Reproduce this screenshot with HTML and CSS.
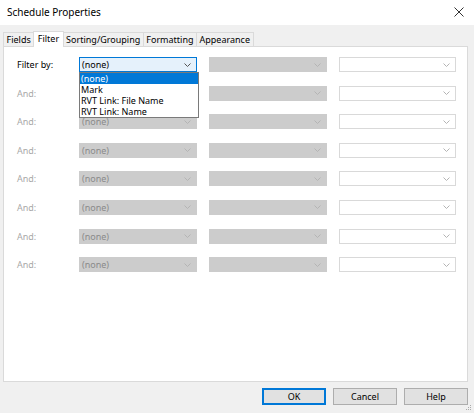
FILE: index.html
```html
<!DOCTYPE html>
<html>
<head>
<meta charset="utf-8">
<link rel="stylesheet" href="styles.css">
</head>
<body>
<div class="window">
  <div class="titlebar">
    <span class="title">Schedule Properties</span>
    <svg class="close" width="10" height="10" viewBox="0 0 10 10"><path d="M0.5 0.5 L9.5 9.5 M9.5 0.5 L0.5 9.5" stroke="#333" stroke-width="1" fill="none"/></svg>
  </div>
  <div class="body">
    <div class="tabs">
      <div class="tab">Fields</div>
      <div class="tab active">Filter</div>
      <div class="tab">Sorting/Grouping</div>
      <div class="tab">Formatting</div>
      <div class="tab">Appearance</div>
    </div>
    <div class="panel">
      <div class="grid">
        <div class="label">Filter by:</div>
        <div class="combo focus"><span>(none)</span><svg class="chev" width="7" height="4" viewBox="0 0 7 4"><path d="M0.5 0.5 L3.5 3.5 L6.5 0.5" stroke="#555" fill="none"/></svg></div>
        <div class="combo disabled"><span></span><svg class="chev" width="7" height="4" viewBox="0 0 7 4"><path d="M0.5 0.5 L3.5 3.5 L6.5 0.5" stroke="#b4b4b4" fill="none"/></svg></div>
        <div class="combo empty"><span></span><svg class="chev" width="7" height="4" viewBox="0 0 7 4"><path d="M0.5 0.5 L3.5 3.5 L6.5 0.5" stroke="#b4b4b4" fill="none"/></svg></div>

        <div class="label dim">And:</div>
        <div class="combo disabled"><span></span><svg class="chev" width="7" height="4" viewBox="0 0 7 4"><path d="M0.5 0.5 L3.5 3.5 L6.5 0.5" stroke="#b4b4b4" fill="none"/></svg></div>
        <div class="combo disabled"><span></span><svg class="chev" width="7" height="4" viewBox="0 0 7 4"><path d="M0.5 0.5 L3.5 3.5 L6.5 0.5" stroke="#b4b4b4" fill="none"/></svg></div>
        <div class="combo empty"><span></span><svg class="chev" width="7" height="4" viewBox="0 0 7 4"><path d="M0.5 0.5 L3.5 3.5 L6.5 0.5" stroke="#b4b4b4" fill="none"/></svg></div>

        <div class="label dim">And:</div>
        <div class="combo disabled low"><span>(none)</span><svg class="chev" width="7" height="4" viewBox="0 0 7 4"><path d="M0.5 0.5 L3.5 3.5 L6.5 0.5" stroke="#b4b4b4" fill="none"/></svg></div>
        <div class="combo disabled"><span></span><svg class="chev" width="7" height="4" viewBox="0 0 7 4"><path d="M0.5 0.5 L3.5 3.5 L6.5 0.5" stroke="#b4b4b4" fill="none"/></svg></div>
        <div class="combo empty"><span></span><svg class="chev" width="7" height="4" viewBox="0 0 7 4"><path d="M0.5 0.5 L3.5 3.5 L6.5 0.5" stroke="#b4b4b4" fill="none"/></svg></div>

        <div class="label dim">And:</div>
        <div class="combo disabled"><span>(none)</span><svg class="chev" width="7" height="4" viewBox="0 0 7 4"><path d="M0.5 0.5 L3.5 3.5 L6.5 0.5" stroke="#b4b4b4" fill="none"/></svg></div>
        <div class="combo disabled"><span></span><svg class="chev" width="7" height="4" viewBox="0 0 7 4"><path d="M0.5 0.5 L3.5 3.5 L6.5 0.5" stroke="#b4b4b4" fill="none"/></svg></div>
        <div class="combo empty"><span></span><svg class="chev" width="7" height="4" viewBox="0 0 7 4"><path d="M0.5 0.5 L3.5 3.5 L6.5 0.5" stroke="#b4b4b4" fill="none"/></svg></div>

        <div class="label dim">And:</div>
        <div class="combo disabled"><span>(none)</span><svg class="chev" width="7" height="4" viewBox="0 0 7 4"><path d="M0.5 0.5 L3.5 3.5 L6.5 0.5" stroke="#b4b4b4" fill="none"/></svg></div>
        <div class="combo disabled"><span></span><svg class="chev" width="7" height="4" viewBox="0 0 7 4"><path d="M0.5 0.5 L3.5 3.5 L6.5 0.5" stroke="#b4b4b4" fill="none"/></svg></div>
        <div class="combo empty"><span></span><svg class="chev" width="7" height="4" viewBox="0 0 7 4"><path d="M0.5 0.5 L3.5 3.5 L6.5 0.5" stroke="#b4b4b4" fill="none"/></svg></div>

        <div class="label dim">And:</div>
        <div class="combo disabled"><span>(none)</span><svg class="chev" width="7" height="4" viewBox="0 0 7 4"><path d="M0.5 0.5 L3.5 3.5 L6.5 0.5" stroke="#b4b4b4" fill="none"/></svg></div>
        <div class="combo disabled"><span></span><svg class="chev" width="7" height="4" viewBox="0 0 7 4"><path d="M0.5 0.5 L3.5 3.5 L6.5 0.5" stroke="#b4b4b4" fill="none"/></svg></div>
        <div class="combo empty"><span></span><svg class="chev" width="7" height="4" viewBox="0 0 7 4"><path d="M0.5 0.5 L3.5 3.5 L6.5 0.5" stroke="#b4b4b4" fill="none"/></svg></div>

        <div class="label dim">And:</div>
        <div class="combo disabled"><span>(none)</span><svg class="chev" width="7" height="4" viewBox="0 0 7 4"><path d="M0.5 0.5 L3.5 3.5 L6.5 0.5" stroke="#b4b4b4" fill="none"/></svg></div>
        <div class="combo disabled"><span></span><svg class="chev" width="7" height="4" viewBox="0 0 7 4"><path d="M0.5 0.5 L3.5 3.5 L6.5 0.5" stroke="#b4b4b4" fill="none"/></svg></div>
        <div class="combo empty"><span></span><svg class="chev" width="7" height="4" viewBox="0 0 7 4"><path d="M0.5 0.5 L3.5 3.5 L6.5 0.5" stroke="#b4b4b4" fill="none"/></svg></div>

        <div class="label dim">And:</div>
        <div class="combo disabled"><span>(none)</span><svg class="chev" width="7" height="4" viewBox="0 0 7 4"><path d="M0.5 0.5 L3.5 3.5 L6.5 0.5" stroke="#b4b4b4" fill="none"/></svg></div>
        <div class="combo disabled"><span></span><svg class="chev" width="7" height="4" viewBox="0 0 7 4"><path d="M0.5 0.5 L3.5 3.5 L6.5 0.5" stroke="#b4b4b4" fill="none"/></svg></div>
        <div class="combo empty"><span></span><svg class="chev" width="7" height="4" viewBox="0 0 7 4"><path d="M0.5 0.5 L3.5 3.5 L6.5 0.5" stroke="#b4b4b4" fill="none"/></svg></div>
      </div>
      <ul class="droplist">
        <li class="sel">(none)</li>
        <li>Mark</li>
        <li>RVT Link: File Name</li>
        <li>RVT Link: Name</li>
      </ul>
    </div>
    <div class="buttons">
      <div class="btn default">OK</div>
      <div class="btn">Cancel</div>
      <div class="btn">Help</div>
    </div>
    <svg class="grip" width="6" height="6" viewBox="0 0 6 6"><rect x="4" y="0" width="1" height="1" fill="#aaa"/><rect x="2" y="2" width="1" height="1" fill="#aaa"/><rect x="4" y="2" width="1" height="1" fill="#aaa"/><rect x="0" y="4" width="1" height="1" fill="#aaa"/><rect x="2" y="4" width="1" height="1" fill="#aaa"/><rect x="4" y="4" width="1" height="1" fill="#aaa"/></svg>
  </div>
</div>
</body>
</html>
```

FILE: styles.css
```css
html, body {
  margin: 0;
  padding: 0;
}
body {
  width: 474px;
  height: 413px;
  overflow: hidden;
  font-family: "Noto Sans", "Open Sans", sans-serif;
  font-size: 9px;
  color: #000;
  background: #f0f0f0;
}
.window {
  width: 474px;
  height: 413px;
  display: flex;
  flex-direction: column;
}
.titlebar {
  height: 25px;
  flex: none;
  background: #fff;
  display: flex;
  align-items: center;
  justify-content: space-between;
  padding: 0 10px 0 7px;
}
.title {
  font-size: 10px;
  color: #000;
  margin-top: -1px;
}
.close {
  margin-top: -1px;
}
.body {
  position: relative;
  flex: 1;
  padding: 7px 6px 0 3px;
}
.tabs {
  display: flex;
  align-items: flex-end;
  height: 14px;
  position: relative;
  z-index: 1;
}
.tab {
  height: 13px;
  line-height: 13px;
  padding: 0 2.5px;
  background: #f0f0f0;
  border: 1px solid #dadada;
  border-bottom: none;
  margin-right: -1px;
  color: #000;
}
.tab.active {
  background: #fff;
  height: 15px;
  line-height: 13px;
  padding: 0 3.5px;
  margin-bottom: -1px;
  position: relative;
  z-index: 2;
}
.panel {
  position: relative;
  height: 336px;
  background: #fff;
  border: 1px solid #dadada;
  box-sizing: border-box;
  padding: 10px 0 0 13px;
}
.grid {
  display: grid;
  grid-template-columns: 50px 118px 118px 117px;
  column-gap: 12px;
  row-gap: 13.6px;
}
.label {
  height: 15px;
  line-height: 15px;
  color: #000;
}
.label.dim {
  color: #a8a8a8;
}
.combo {
  height: 15px;
  box-sizing: border-box;
  display: flex;
  align-items: center;
  justify-content: space-between;
  padding: 0 5px 0 2px;
  line-height: 11px;
}
.combo.focus {
  background: #e5f1fb;
  border: 1px solid #0078d7;
}
.combo.disabled {
  background: #cccccc;
  border: 1px solid #cccccc;
  color: #8a8a8a;
}
.combo.empty {
  background: #fff;
  border: 1px solid #d9d9d9;
}
.droplist {
  position: absolute;
  left: 75px;
  top: 25px;
  width: 120px;
  margin: 0;
  padding: 0;
  list-style: none;
  background: #fff;
  border: 1px solid #7a7a7a;
  box-sizing: border-box;
  z-index: 3;
}
.droplist li {
  height: 11px;
  line-height: 11px;
  padding-left: 1px;
}
.droplist li.sel {
  background: #0078d7;
  color: #fff;
}
.buttons {
  display: flex;
  justify-content: flex-end;
  gap: 7px;
  margin-top: 6px;
  padding-right: 0;
}
.btn {
  width: 64px;
  height: 17px;
  box-sizing: border-box;
  background: #e1e1e1;
  border: 1px solid #adadad;
  text-align: center;
  line-height: 15px;
}
.btn.default {
  border: 2px solid #0078d7;
  line-height: 13px;
}
.grip {
  position: absolute;
  right: 2px;
  bottom: 2px;
}
```
